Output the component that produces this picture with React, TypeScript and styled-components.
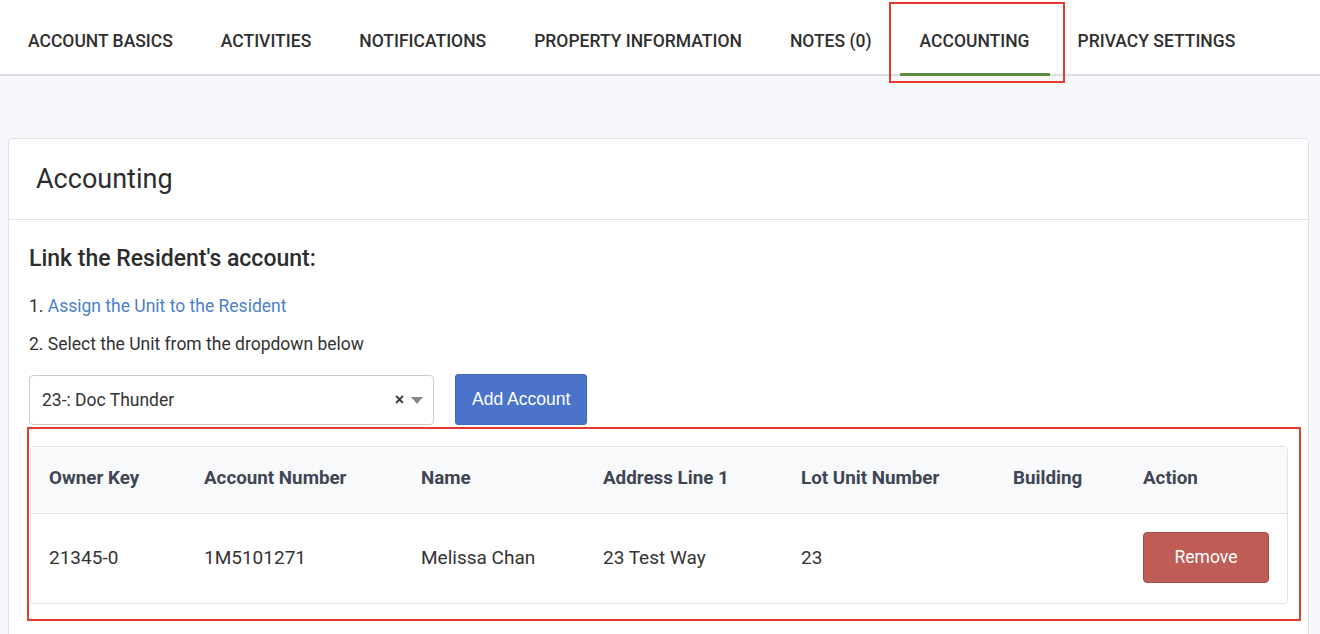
import React, { useState } from "react";
import styled, { createGlobalStyle } from "styled-components";

const GlobalStyle = createGlobalStyle`
  html, body {
    margin: 0;
    padding: 0;
    background: #f6f8fc;
    font-family: Roboto, "Noto Sans", sans-serif;
    color: #333333;
  }
`;

const Page = styled.div`
  position: relative;
  width: 1320px;
  height: 634px;
  overflow: hidden;
  background: #f6f8fc;
`;

const TabBar = styled.nav`
  display: flex;
  align-items: stretch;
  gap: 8px;
  height: 74px;
  padding-left: 8px;
  background: #ffffff;
  border-bottom: 2px solid #dcdee3;
`;

const Tab = styled.div<{ active?: boolean }>`
  position: relative;
  display: flex;
  align-items: center;
  padding: 8px 20px 0;
  font-size: 17.5px;
  font-weight: 500;
  text-transform: uppercase;
  color: #2f2f2f;
  cursor: pointer;

  &::after {
    content: "";
    position: absolute;
    left: 0;
    right: 0;
    bottom: -2px;
    height: 3px;
    background: ${({ active }) => (active ? "#5b8d3e" : "transparent")};
  }
`;

const Content = styled.main`
  padding: 62px 11px 0 8px;
`;

const Card = styled.section`
  background: #ffffff;
  border: 1px solid #dfe3e9;
  border-radius: 4px;
  min-height: 520px;
`;

const CardHeader = styled.header`
  height: 80px;
  display: flex;
  align-items: center;
  padding: 0 27px;
  border-bottom: 1px solid #dfe3e9;
`;

const CardTitle = styled.h2`
  margin: 0;
  font-size: 27px;
  font-weight: 400;
  color: #2d2d2d;
`;

const CardBody = styled.div`
  padding: 25px 20px 20px;
`;

const SectionHeading = styled.h3`
  margin: 0;
  font-size: 23px;
  line-height: 27px;
  font-weight: 500;
  color: #2d2d2d;
`;

const Step = styled.p<{ gap: number }>`
  margin: ${({ gap }) => gap}px 0 0;
  font-size: 17.5px;
  line-height: 26px;
  color: #333333;
`;

const StepLink = styled.a`
  color: #4c7fc9;
  text-decoration: none;
  cursor: pointer;
`;

const Controls = styled.div`
  display: flex;
  align-items: center;
  gap: 21px;
  margin-top: 17px;
`;

const Select = styled.div`
  box-sizing: border-box;
  display: flex;
  align-items: center;
  width: 405px;
  height: 50px;
  padding: 0 10px 0 12px;
  border: 1px solid #cbcbcb;
  border-radius: 4px;
  font-size: 17.5px;
  color: #333333;
  background: #ffffff;
`;

const SelectValue = styled.span`
  flex: 1;
`;

const ClearMark = styled.span`
  font-family: "Liberation Sans", Arial, sans-serif;
  font-size: 16px;
  font-weight: 700;
  margin-right: 7px;
  color: #333333;
`;

const Caret = styled.span`
  width: 0;
  height: 0;
  border-left: 6px solid transparent;
  border-right: 6px solid transparent;
  border-top: 7px solid #888888;
  margin-top: 2px;
`;

const PrimaryButton = styled.button`
  height: 51px;
  padding: 0 16px;
  border: 1px solid #4169bd;
  border-radius: 3px;
  background: #4a73c9;
  color: #ffffff;
  font-family: "Liberation Sans", Arial, sans-serif;
  font-size: 17.5px;
  cursor: pointer;
`;

const TableWrap = styled.div`
  margin-top: 21px;
  margin-left: 1px;
  border: 1px solid #e0e4e9;
  border-radius: 4px;
  overflow: hidden;
`;

const Table = styled.table`
  width: 100%;
  table-layout: fixed;
  border-collapse: collapse;
`;

const HeadCell = styled.th<{ width?: number }>`
  box-sizing: border-box;
  height: 66px;
  padding: 0 0 3px 18px;
  width: ${({ width }) => (width ? `${width}px` : "auto")};
  text-align: left;
  font-size: 18.8px;
  font-weight: 700;
  color: #3e4553;
  background: #f8f9fb;
  border-bottom: 1px solid #dfe3e9;
`;

const BodyCell = styled.td`
  box-sizing: border-box;
  height: 90px;
  padding: 0 0 2px 18px;
  font-size: 19px;
  color: #333333;
`;

const DangerButton = styled.button`
  width: 126px;
  height: 51px;
  border: 1px solid #a94c46;
  border-radius: 4px;
  background: #bd5d56;
  color: #ffffff;
  font-family: Roboto, sans-serif;
  font-size: 17.5px;
  cursor: pointer;
`;

const Highlight = styled.div<{ x: number; y: number; w: number; h: number }>`
  position: absolute;
  left: ${({ x }) => x}px;
  top: ${({ y }) => y}px;
  width: ${({ w }) => w}px;
  height: ${({ h }) => h}px;
  box-sizing: border-box;
  border: 2px solid #e6392f;
  pointer-events: none;
`;

const tabs = [
  "Account Basics",
  "Activities",
  "Notifications",
  "Property Information",
  "Notes (0)",
  "Accounting",
  "Privacy Settings",
];

const columns = [
  { label: "Owner Key", width: 155 },
  { label: "Account Number", width: 217 },
  { label: "Name", width: 182 },
  { label: "Address Line 1", width: 198 },
  { label: "Lot Unit Number", width: 212 },
  { label: "Building", width: 130 },
  { label: "Action" },
];

const accounts = [
  {
    ownerKey: "21345-0",
    accountNumber: "1M5101271",
    name: "Melissa Chan",
    address: "23 Test Way",
    lotUnit: "23",
    building: "",
  },
];

function App() {
  const [activeTab, setActiveTab] = useState("Accounting");

  return (
    <Page>
      <GlobalStyle />
      <TabBar>
        {tabs.map((tab) => (
          <Tab key={tab} active={activeTab === tab} onClick={() => setActiveTab(tab)}>
            {tab}
          </Tab>
        ))}
      </TabBar>

      <Content>
        <Card>
          <CardHeader>
            <CardTitle>Accounting</CardTitle>
          </CardHeader>
          <CardBody>
            <SectionHeading>Link the Resident's account:</SectionHeading>
            <Step gap={21}>
              1. <StepLink>Assign the Unit to the Resident</StepLink>
            </Step>
            <Step gap={12}>2. Select the Unit from the dropdown below</Step>

            <Controls>
              <Select>
                <SelectValue>23-: Doc Thunder</SelectValue>
                <ClearMark>×</ClearMark>
                <Caret />
              </Select>
              <PrimaryButton>Add Account</PrimaryButton>
            </Controls>

            <TableWrap>
              <Table>
                <thead>
                  <tr>
                    {columns.map((col) => (
                      <HeadCell key={col.label} width={col.width}>
                        {col.label}
                      </HeadCell>
                    ))}
                  </tr>
                </thead>
                <tbody>
                  {accounts.map((acc) => (
                    <tr key={acc.ownerKey}>
                      <BodyCell>{acc.ownerKey}</BodyCell>
                      <BodyCell>{acc.accountNumber}</BodyCell>
                      <BodyCell>{acc.name}</BodyCell>
                      <BodyCell>{acc.address}</BodyCell>
                      <BodyCell>{acc.lotUnit}</BodyCell>
                      <BodyCell>{acc.building}</BodyCell>
                      <BodyCell>
                        <DangerButton>Remove</DangerButton>
                      </BodyCell>
                    </tr>
                  ))}
                </tbody>
              </Table>
            </TableWrap>
          </CardBody>
        </Card>
      </Content>

      <Highlight x={889} y={2} w={176} h={81} />
      <Highlight x={27} y={427} w={1274} h={194} />
    </Page>
  );
}

export default App;
